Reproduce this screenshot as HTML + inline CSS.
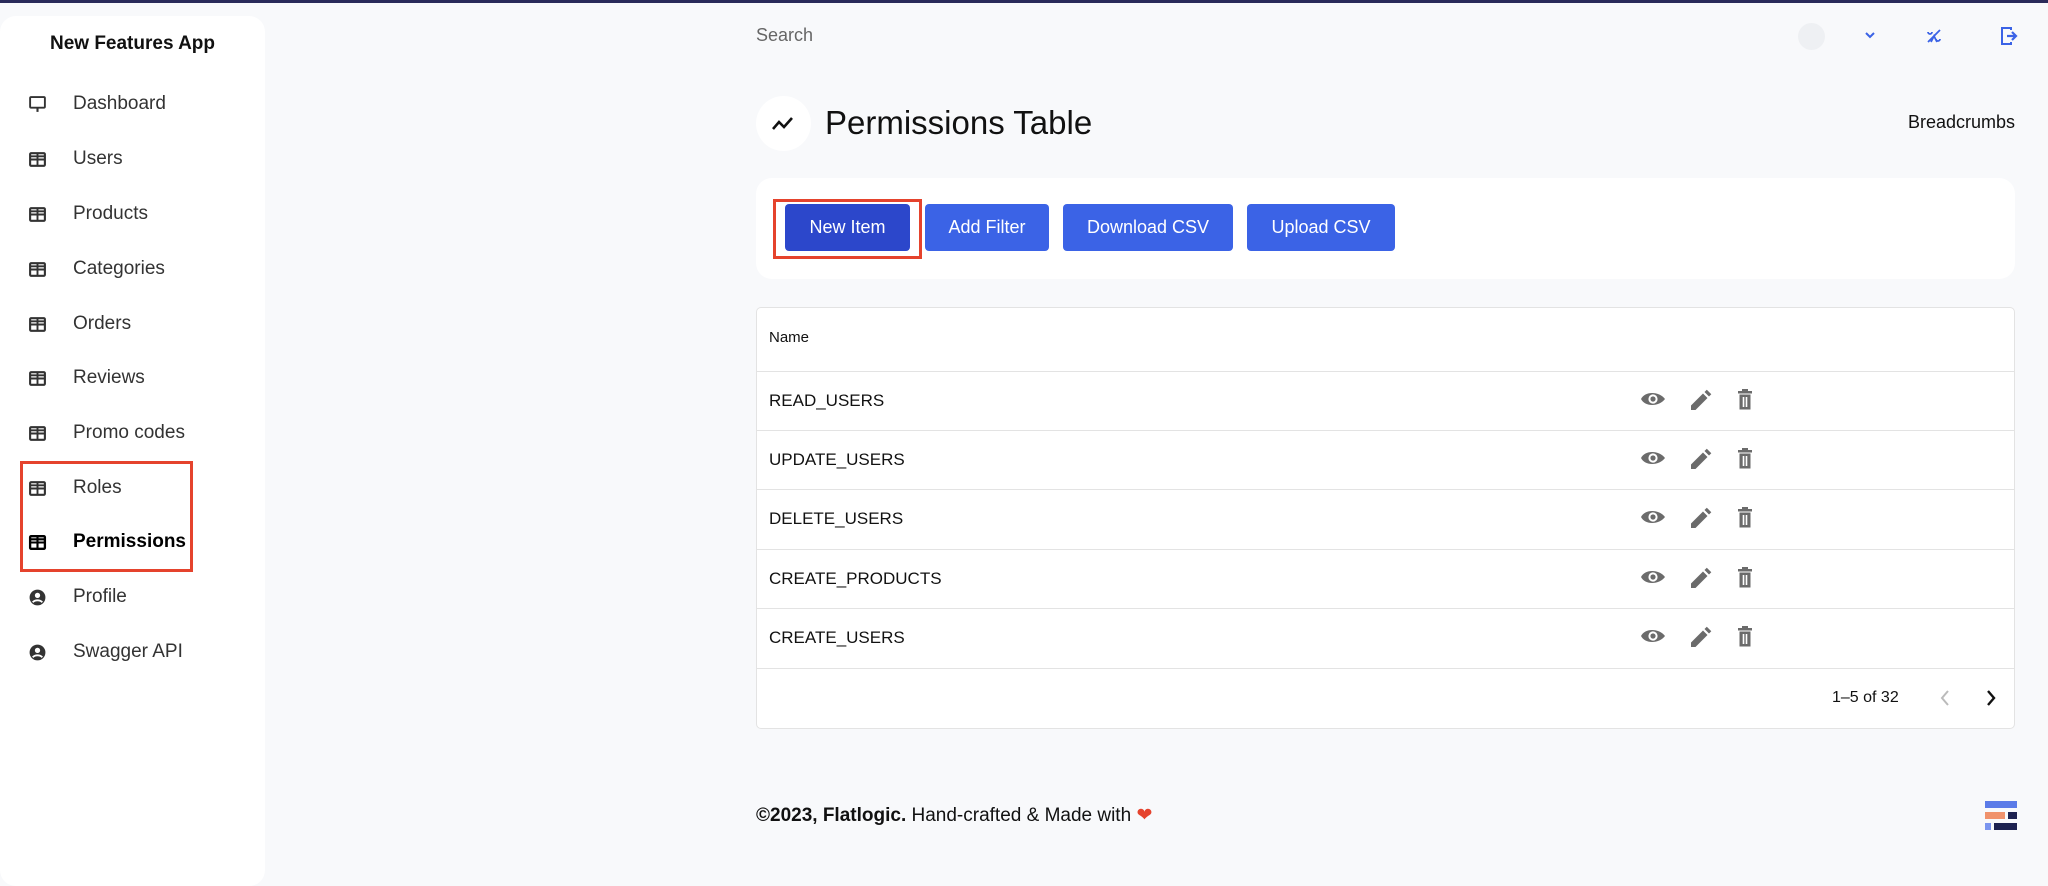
<!DOCTYPE html>
<html><head><meta charset="utf-8"><style>
*{box-sizing:border-box;margin:0;padding:0}
body{width:2048px;height:875px;overflow:hidden;background:#f8f9fb;font-family:"Liberation Sans",sans-serif;color:#111;position:relative;border-top:3px solid #2a2a5a}
.abs{position:absolute}
.side{left:0;top:13px;width:265px;height:870px;background:#fff;border-radius:16px}
.brand{left:0;width:265px;top:30px;text-align:center;font-weight:bold;font-size:19px}
.mi{left:28px;height:30px;font-size:19px;color:#333;display:flex;align-items:center}
.mi svg{width:19px;height:19px;margin-right:26px}
.btn{position:absolute;top:201px;height:47px;background:#3b63e6;color:#fff;font-size:18px;border-radius:4px;display:flex;align-items:center;justify-content:center}
.row{position:absolute;left:756px;width:1259px;height:59px;border-top:1px solid #e3e3e3;font-size:17px;display:flex;align-items:center;padding-left:13px;color:#111}
</style></head><body>
<div class="abs side"></div>
<div class="abs brand">New Features App</div>

<div class="abs mi" style="top:86px"><svg viewBox="0 0 18 18"><rect x="2" y="2" width="14" height="10" rx="1" fill="none" stroke="#333" stroke-width="1.8"/><path d="M9 12v4" stroke="#333" stroke-width="2"/></svg>Dashboard</div>
<div class="abs mi" style="top:141px"><svg viewBox="0 0 18 18"><rect x="2" y="3" width="14" height="12" rx="1" fill="none" stroke="#333" stroke-width="2"/><path d="M2 9h14M9 3v12M2 6h14" stroke="#333" stroke-width="1.8"/></svg>Users</div>
<div class="abs mi" style="top:196px"><svg viewBox="0 0 18 18"><rect x="2" y="3" width="14" height="12" rx="1" fill="none" stroke="#333" stroke-width="2"/><path d="M2 9h14M9 3v12M2 6h14" stroke="#333" stroke-width="1.8"/></svg>Products</div>
<div class="abs mi" style="top:251px"><svg viewBox="0 0 18 18"><rect x="2" y="3" width="14" height="12" rx="1" fill="none" stroke="#333" stroke-width="2"/><path d="M2 9h14M9 3v12M2 6h14" stroke="#333" stroke-width="1.8"/></svg>Categories</div>
<div class="abs mi" style="top:306px"><svg viewBox="0 0 18 18"><rect x="2" y="3" width="14" height="12" rx="1" fill="none" stroke="#333" stroke-width="2"/><path d="M2 9h14M9 3v12M2 6h14" stroke="#333" stroke-width="1.8"/></svg>Orders</div>
<div class="abs mi" style="top:360px"><svg viewBox="0 0 18 18"><rect x="2" y="3" width="14" height="12" rx="1" fill="none" stroke="#333" stroke-width="2"/><path d="M2 9h14M9 3v12M2 6h14" stroke="#333" stroke-width="1.8"/></svg>Reviews</div>
<div class="abs mi" style="top:415px"><svg viewBox="0 0 18 18"><rect x="2" y="3" width="14" height="12" rx="1" fill="none" stroke="#333" stroke-width="2"/><path d="M2 9h14M9 3v12M2 6h14" stroke="#333" stroke-width="1.8"/></svg>Promo codes</div>
<div class="abs mi" style="top:470px"><svg viewBox="0 0 18 18"><rect x="2" y="3" width="14" height="12" rx="1" fill="none" stroke="#333" stroke-width="2"/><path d="M2 9h14M9 3v12M2 6h14" stroke="#333" stroke-width="1.8"/></svg>Roles</div>
<div class="abs mi" style="top:524px;font-weight:bold;color:#000"><svg viewBox="0 0 18 18"><rect x="2" y="3" width="14" height="12" rx="1" fill="none" stroke="#000" stroke-width="2.2"/><path d="M2 9h14M9 3v12M2 6h14" stroke="#000" stroke-width="2"/></svg>Permissions</div>
<div class="abs mi" style="top:579px"><svg viewBox="0 0 18 18"><circle cx="9" cy="9" r="7.5" fill="#333"/><circle cx="9" cy="7" r="2.5" fill="#fff"/><path d="M4.5 13.5c2-2.5 7-2.5 9 0" stroke="#fff" stroke-width="1.8" fill="none"/></svg>Profile</div>
<div class="abs mi" style="top:634px"><svg viewBox="0 0 18 18"><circle cx="9" cy="9" r="7.5" fill="#333"/><circle cx="9" cy="7" r="2.5" fill="#fff"/><path d="M4.5 13.5c2-2.5 7-2.5 9 0" stroke="#fff" stroke-width="1.8" fill="none"/></svg>Swagger API</div>
<div class="abs" style="left:20px;top:458px;width:173px;height:111px;border:3px solid #e5432d"></div>

<div class="abs" style="left:756px;top:22px;font-size:18px;color:#666">Search</div>
<div class="abs" style="left:1798px;top:20px;width:27px;height:27px;border-radius:50%;background:#eef0f3"></div>
<svg class="abs" style="left:1864px;top:27px" width="12" height="10" viewBox="0 0 12 10"><path d="M2 3l4 4 4-4" stroke="#3b63e6" stroke-width="2" fill="none"/></svg>
<svg class="abs" style="left:1925px;top:24px" width="18" height="18" viewBox="0 0 18 18"><path d="M3 15L15 3M6 15l3-6 3 6M3 5a2 2 0 1 0 4 0M11 12a2 2 0 1 0 4 0" stroke="#3b63e6" stroke-width="1.8" fill="none"/></svg>
<svg class="abs" style="left:2000px;top:23px" width="18" height="20" viewBox="0 0 18 20"><path d="M11 4V2H2v16h9v-2" stroke="#3b63e6" stroke-width="2" fill="none"/><path d="M7 10h8M12 6l4 4-4 4" stroke="#3b63e6" stroke-width="2.2" fill="none"/></svg>

<div class="abs" style="left:756px;top:93px;width:55px;height:55px;border-radius:50%;background:#fff"></div>
<svg class="abs" style="left:770px;top:108px" width="26" height="26" viewBox="0 0 26 26"><path d="M3 18l6-7 5 5 8-9" stroke="#111" stroke-width="2.6" fill="none"/></svg>
<div class="abs" style="left:825px;top:101px;font-size:33px">Permissions Table</div>
<div class="abs" style="right:33px;top:109px;font-size:18px;font-weight:500">Breadcrumbs</div>

<div class="abs" style="left:756px;top:175px;width:1259px;height:101px;background:#fff;border-radius:16px"></div>
<div class="btn" style="left:785px;width:125px;background:#2c47cb">New Item</div>
<div class="btn" style="left:925px;width:124px">Add Filter</div>
<div class="btn" style="left:1063px;width:170px">Download CSV</div>
<div class="btn" style="left:1247px;width:148px">Upload CSV</div>
<div class="abs" style="left:773px;top:196px;width:149px;height:60px;border:3px solid #e5432d"></div>

<div class="abs" style="left:756px;top:304px;width:1259px;height:422px;background:#fff;border:1px solid #e3e3e3;border-radius:5px"></div>
<div class="abs" style="left:769px;top:326px;font-size:15px">Name</div>
<div class="row" style="top:368px">READ_USERS</div>
<div class="row" style="top:427px">UPDATE_USERS</div>
<div class="row" style="top:486px">DELETE_USERS</div>
<div class="row" style="top:546px">CREATE_PRODUCTS</div>
<div class="row" style="top:605px">CREATE_USERS</div>
<div class="row" style="top:665px;height:61px"></div>

<svg width="0" height="0" style="position:absolute"><defs>
<g id="ic">
<path d="M0 12C4 4 18 4 24 12C18 20 4 20 0 12z" fill="#6b6b6b"/><circle cx="12" cy="12" r="4.6" fill="#fff"/><circle cx="12" cy="12" r="2.6" fill="#6b6b6b"/>
<path d="M50 23l0-4.5 12-12 4.5 4.5-12 12z M63.5 5l2.3-2.3 4.5 4.5-2.3 2.3z" fill="#6b6b6b"/>
<path d="M97 4h14v2.5h-14z M101 2h6v2h-6z M98.5 7.5h11v15h-11z" fill="#6b6b6b"/><path d="M102.5 10v10M105.5 10v10" stroke="#fff" stroke-width="1.6"/>
</g></defs></svg>
<svg class="abs" style="left:1641px;top:384px" width="115" height="26"><use href="#ic"/></svg>
<svg class="abs" style="left:1641px;top:443px" width="115" height="26"><use href="#ic"/></svg>
<svg class="abs" style="left:1641px;top:502px" width="115" height="26"><use href="#ic"/></svg>
<svg class="abs" style="left:1641px;top:562px" width="115" height="26"><use href="#ic"/></svg>
<svg class="abs" style="left:1641px;top:621px" width="115" height="26"><use href="#ic"/></svg>

<div class="abs" style="left:1832px;top:686px;font-size:16px">1–5 of 32</div>
<svg class="abs" style="left:1938px;top:684px" width="14" height="22"><path d="M10 4l-6 7 6 7" stroke="#bbb" stroke-width="2" fill="none"/></svg>
<svg class="abs" style="left:1984px;top:684px" width="14" height="22"><path d="M4 4l6 7-6 7" stroke="#111" stroke-width="2.4" fill="none"/></svg>

<div class="abs" style="left:756px;top:801px;font-size:19px"><b>©2023, Flatlogic.</b> Hand-crafted &amp; Made with <span style="color:#e5432d">❤</span></div>
<div class="abs" style="left:1985px;top:798px;width:32px;height:7px;background:#5b7be8"></div>
<div class="abs" style="left:1985px;top:809px;width:20px;height:7px;background:#f0926c"></div>
<div class="abs" style="left:2008px;top:809px;width:9px;height:7px;background:#1d2250"></div>
<div class="abs" style="left:1985px;top:820px;width:6px;height:7px;background:#7b95ef"></div>
<div class="abs" style="left:1994px;top:820px;width:23px;height:7px;background:#1d2250"></div>
</body></html>
